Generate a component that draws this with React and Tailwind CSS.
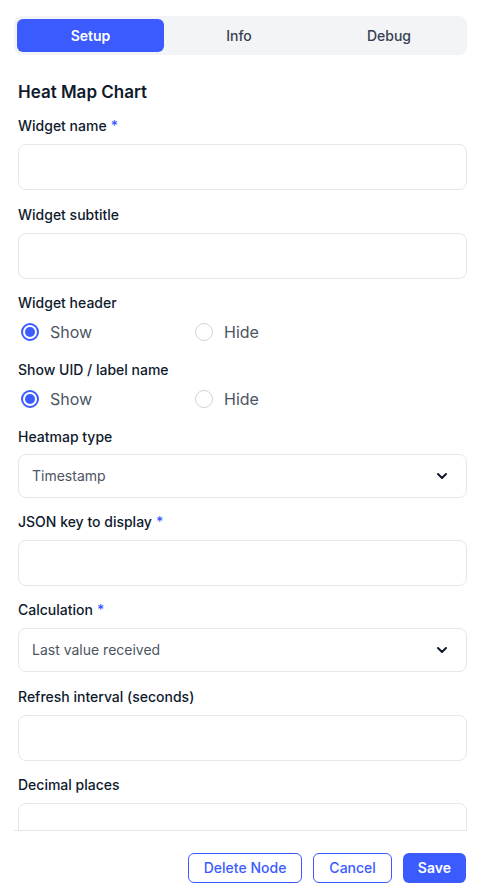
import { ChevronDown } from 'lucide-react'

const font = { fontFamily: 'Inter, "Noto Sans", sans-serif' }

function Label({ children, required, className = 'mb-2' }) {
  return (
    <label className={`block text-sm font-medium leading-5 text-[#0f1b2d] ${className}`}>
      {children}
      {required && <span className="text-[#3b5bff] ml-1">*</span>}
    </label>
  )
}

function TextField({ label, required }) {
  return (
    <div className="mb-[14.5px]">
      <Label required={required}>{label}</Label>
      <input className="block w-full h-[46px] rounded-lg border border-[#e5e7eb] bg-white px-3 text-sm outline-none" />
    </div>
  )
}

function SelectField({ label, required, value, className = 'mb-[14.5px]', labelClass }) {
  return (
    <div className={className}>
      <Label required={required} className={labelClass}>{label}</Label>
      <div className="flex items-center justify-between h-[44px] rounded-lg border border-[#e5e7eb] bg-white pl-[13px] pr-[16px]">
        <span className="text-sm text-[#4b5563]">{value}</span>
        <ChevronDown className="w-4 h-4 text-[#111827]" strokeWidth={3} />
      </div>
    </div>
  )
}

function Radio({ checked, label }) {
  return (
    <div className="flex items-center gap-[11px] w-[174px]">
      {checked ? (
        <span className="w-[18px] h-[18px] rounded-full border-2 border-[#3b5bff] flex items-center justify-center">
          <span className="w-[10px] h-[10px] rounded-full bg-[#3b5bff]" />
        </span>
      ) : (
        <span className="w-[18px] h-[18px] rounded-full border border-[#d1d5db]" />
      )}
      <span className="text-base text-[#4b5563]">{label}</span>
    </div>
  )
}

function RadioGroup({ label, className }) {
  return (
    <div className={className}>
      <Label className="mb-[7px]">{label}</Label>
      <div className="flex items-center h-6 pl-[3px]">
        <Radio checked label="Show" />
        <Radio label="Hide" />
      </div>
    </div>
  )
}

export default function App() {
  return (
    <div style={font} className="w-[482px] h-[894px] bg-white flex flex-col">
      <div className="flex-1 overflow-hidden pl-[14px] pr-[15px] pt-4">
        {/* Tabs */}
        <div className="flex rounded-lg bg-[#f3f4f6] p-[3px] mb-[25px]">
          <button className="w-[147px] h-[33px] rounded-md bg-[#3b5bff] text-white text-sm font-semibold">Setup</button>
          <button className="flex-1 h-[33px] text-sm font-medium text-[#374151]">Info</button>
          <button className="flex-1 h-[33px] text-sm font-medium text-[#374151]">Debug</button>
        </div>

        <div className="pl-1">
          <h2 className="text-[17px] font-semibold leading-6 text-[#0f1b2d] mb-3">Heat Map Chart</h2>

          <TextField label="Widget name" required />
          <TextField label="Widget subtitle" />
          <RadioGroup label="Widget header" className="mb-4" />
          <RadioGroup label="Show UID / label name" className="mb-4" />
          <SelectField label="Heatmap type" value="Timestamp" labelClass="mb-[7px]" className="mb-[13.5px]" />
          <TextField label="JSON key to display" required />
          <SelectField label="Calculation" required value="Last value received" />
          <TextField label="Refresh interval (seconds)" />
          <TextField label="Decimal places" />
        </div>
      </div>

      <div className="ml-[14px] mr-[15px] border-t border-[#e5e7eb] flex justify-end gap-[11px] pt-[22px] pb-[11px] pr-[1px]">
        <button className="h-[30px] px-[15px] rounded-md border border-[#3b5bff] text-sm font-medium text-[#3b5bff] bg-white">Delete Node</button>
        <button className="h-[30px] px-[15px] rounded-md border border-[#3b5bff] text-sm font-medium text-[#3b5bff] bg-white">Cancel</button>
        <button className="h-[30px] px-[15px] rounded-md bg-[#3b5bff] text-sm font-semibold text-white">Save</button>
      </div>
    </div>
  )
}
